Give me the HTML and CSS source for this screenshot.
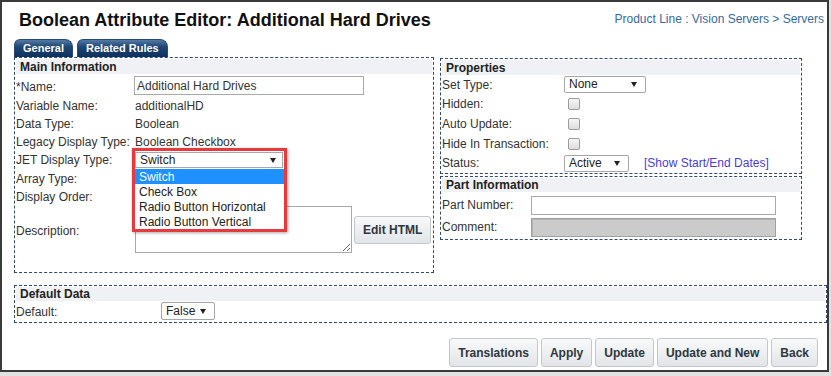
FILE: index.html
```html
<!DOCTYPE html>
<html lang="en">
<head>
<meta charset="utf-8">
<title>Boolean Attribute Editor</title>
<link rel="stylesheet" href="styles.css">
</head>
<body>
<div class="frame">
  <div class="top">
    <h1 class="title">Boolean Attribute Editor: Additional Hard Drives</h1>
    <div class="crumb">Product Line : Vision Servers &gt; Servers</div>
  </div>
  <div class="tabs">
    <div class="tab">General</div>
    <div class="tab">Related Rules</div>
  </div>
  <div class="cols">
    <section class="box main">
      <div class="hd">Main Information</div>
      <div class="row name"><span class="lbl">*Name:</span><input class="txt nm" type="text" value="Additional Hard Drives"></div>
      <div class="row"><span class="lbl">Variable Name:</span><span class="val">additionalHD</span></div>
      <div class="row"><span class="lbl">Data Type:</span><span class="val">Boolean</span></div>
      <div class="row"><span class="lbl">Legacy Display Type:</span><span class="val">Boolean Checkbox</span></div>
      <div class="row jet"><span class="lbl">JET Display Type:</span>
        <div class="dd">
          <div class="dd-sel"><span>Switch</span><span class="arr"></span></div>
          <div class="opt on">Switch</div>
          <div class="opt">Check Box</div>
          <div class="opt">Radio Button Horizontal</div>
          <div class="opt">Radio Button Vertical</div>
        </div>
      </div>
      <div class="row"><span class="lbl">Array Type:</span></div>
      <div class="row"><span class="lbl">Display Order:</span></div>
      <div class="row desc"><span class="lbl">Description:</span><textarea class="ta"></textarea><button class="btn edit" type="button">Edit HTML</button></div>
    </section>
    <div class="side">
      <section class="box props">
        <div class="hd">Properties</div>
        <div class="row r19"><span class="lbl">Set Type:</span><span class="sel w-set"><span>None</span><span class="arr"></span></span></div>
        <div class="row r20"><span class="lbl">Hidden:</span><span class="cb"></span></div>
        <div class="row r20"><span class="lbl">Auto Update:</span><span class="cb"></span></div>
        <div class="row r19"><span class="lbl">Hide In Transaction:</span><span class="cb"></span></div>
        <div class="row r20"><span class="lbl">Status:</span><span class="sel w-st"><span>Active</span><span class="arr"></span></span><span class="lnk">[Show Start/End Dates]</span></div>
      </section>
      <section class="box part">
        <div class="hd">Part Information</div>
        <div class="row r22 first"><span class="lbl">Part Number:</span><input class="txt pn" type="text"></div>
        <div class="row r22"><span class="lbl">Comment:</span><input class="txt cm" type="text"></div>
      </section>
    </div>
  </div>
  <section class="box dflt">
    <div class="hd">Default Data</div>
    <div class="row r20"><span class="lbl">Default:</span><span class="sel w-df"><span>False</span><span class="arr"></span></span></div>
  </section>
  <div class="actions">
    <button class="btn" type="button">Translations</button>
    <button class="btn" type="button">Apply</button>
    <button class="btn" type="button">Update</button>
    <button class="btn" type="button">Update and New</button>
    <button class="btn" type="button">Back</button>
  </div>
</div>
</body>
</html>
```
FILE: styles.css
```css
* { box-sizing: border-box; }
html, body { margin: 0; }
body {
  background: #e2e2e2;
  font-family: "Liberation Sans", Arial, sans-serif;
  font-size: 12px;
  color: #333;
}
.frame {
  width: 829px;
  height: 372px;
  border: 2px solid #3a3a3a;
  background: #fff;
}
.top {
  display: flex;
  justify-content: space-between;
  align-items: flex-start;
  height: 37px;
}
.title {
  margin: 8px 0 0 17px;
  font-size: 18px;
  line-height: 21px;
  font-weight: bold;
  color: #111;
}
.crumb {
  margin: 10px 3px 0 0;
  line-height: 14px;
  color: #356aa0;
}
.tabs {
  display: flex;
  gap: 4px;
  padding-left: 12px;
  height: 18px;
}
.tab {
  height: 18px;
  padding: 0 8px;
  line-height: 16px;
  font-size: 11px;
  font-weight: bold;
  color: #fff;
  border: 1px solid #28497a;
  border-bottom: 0;
  border-radius: 6px 8px 0 0;
  background: linear-gradient(#5479a5, #1e4674 40%, #0e315f);
}
.cols {
  display: flex;
  align-items: flex-start;
  padding-left: 12px;
}
.box {
  border: 1px dashed #2e4a72;
  padding: 1px;
}
.hd {
  background: #eff1f5;
  font-weight: bold;
  color: #222;
  height: 15px;
  line-height: 17px;
  padding-left: 4px;
}
.row {
  display: flex;
  align-items: center;
  height: 18px;
  line-height: 18px;
}
.lbl { flex-shrink: 0; }

/* main information */
.main { width: 420px; height: 216px; }
.main .lbl { width: 119px; }
.main .lbl, .main .val { padding-top: 4px; }
.main .jet .lbl, .main .desc .lbl { padding-top: 2px; }
.main .row.name { height: 21px; }
.main .row.name .txt { align-self: flex-end; }
.main .row.jet { height: 19px; position: relative; }
.main .row.desc { height: 51px; }
.txt {
  height: 19px;
  border: 1px solid #a9a9a9;
  padding: 0 2px;
  margin: 0;
  font-family: inherit;
  font-size: 12px;
  color: #333;
  background: #fff;
}
.nm { width: 230px; margin-left: -1px; }
.ta {
  width: 217px;
  height: 47px;
  margin: 0;
  border: 1px solid #a9a9a9;
  font-family: inherit;
  font-size: 12px;
}
.dd {
  position: absolute;
  left: 116px;
  top: -1px;
  width: 155px;
  height: 84px;
  border: 3px solid #e63a3e;
  background: #fff;
  box-shadow: 1px 1px 3px rgba(0, 0, 0, 0.35);
  z-index: 2;
}
.dd-sel {
  height: 16px;
  margin: 1px 1px 1px 0;
  border: 1px solid #a8a8a8;
  display: flex;
  justify-content: space-between;
  align-items: center;
  padding: 0 6px 0 4px;
  line-height: 14px;
  color: #222;
}
.opt {
  height: 15px;
  line-height: 17px;
  padding-left: 4px;
  color: #222;
  white-space: nowrap;
}
.opt.on { background: #1e90ff; color: #fff; }

/* selects */
.sel {
  display: inline-flex;
  justify-content: space-between;
  align-items: center;
  height: 17px;
  border: 1px solid #a6a6a6;
  border-radius: 2px;
  padding: 0 8px 0 4px;
  background: #fff;
  color: #222;
  line-height: 15px;
}
.arr {
  width: 0;
  height: 0;
  border-left: 3px solid transparent;
  border-right: 3px solid transparent;
  border-top: 5px solid #222;
}
.w-set { width: 82px; }
.w-st { width: 65px; }
.w-df { width: 54px; height: 18px; }

/* right column */
.side { margin-left: 6px; width: 362px; }
.props { margin-top: 1px; height: 116px; }
.props .hd { height: 15px; line-height: 17px; }
.props .lbl { width: 122px; }
.r19 { height: 19px; }
.r20 { height: 20px; }
.r21 { height: 21px; }
.r22 { height: 22px; }
.cb {
  width: 12px;
  height: 12px;
  margin-left: 4px;
  border: 1px solid #9b9b9b;
  border-radius: 2px;
  background: linear-gradient(#f6f6f6, #dedede);
}
.lnk { margin-left: 15px; color: #4a3bd6; }
.part { margin-top: 2px; padding-bottom: 1px; }
.part .hd { height: 14px; line-height: 15px; }
.part .first { margin-top: 2px; }
.part .lbl { width: 89px; }
.pn, .cm { width: 245px; }
.cm {
  background: #cbcbcb;
  border-color: #a0a0a0;
  box-shadow: inset 1px 1px 0 #b3b3b3;
}

/* default data */
.dflt { margin: 12px 0 0 12px; padding-bottom: 1px; }
.dflt .hd { height: 14px; line-height: 15px; }
.dflt .lbl { width: 145px; padding-top: 2px; }

/* buttons */
.btn {
  height: 29px;
  padding: 0 8px;
  border: 1px solid #c3c8ce;
  border-radius: 3px;
  background: linear-gradient(#f8f9fa, #e2e5e8);
  font-family: inherit;
  font-size: 12px;
  font-weight: bold;
  color: #2f3740;
  white-space: nowrap;
}
.edit { margin-left: 2px; height: 28px; flex-shrink: 0; }
.actions {
  display: flex;
  justify-content: flex-end;
  gap: 3px;
  margin-top: 15px;
  padding-right: 9px;
}
```
